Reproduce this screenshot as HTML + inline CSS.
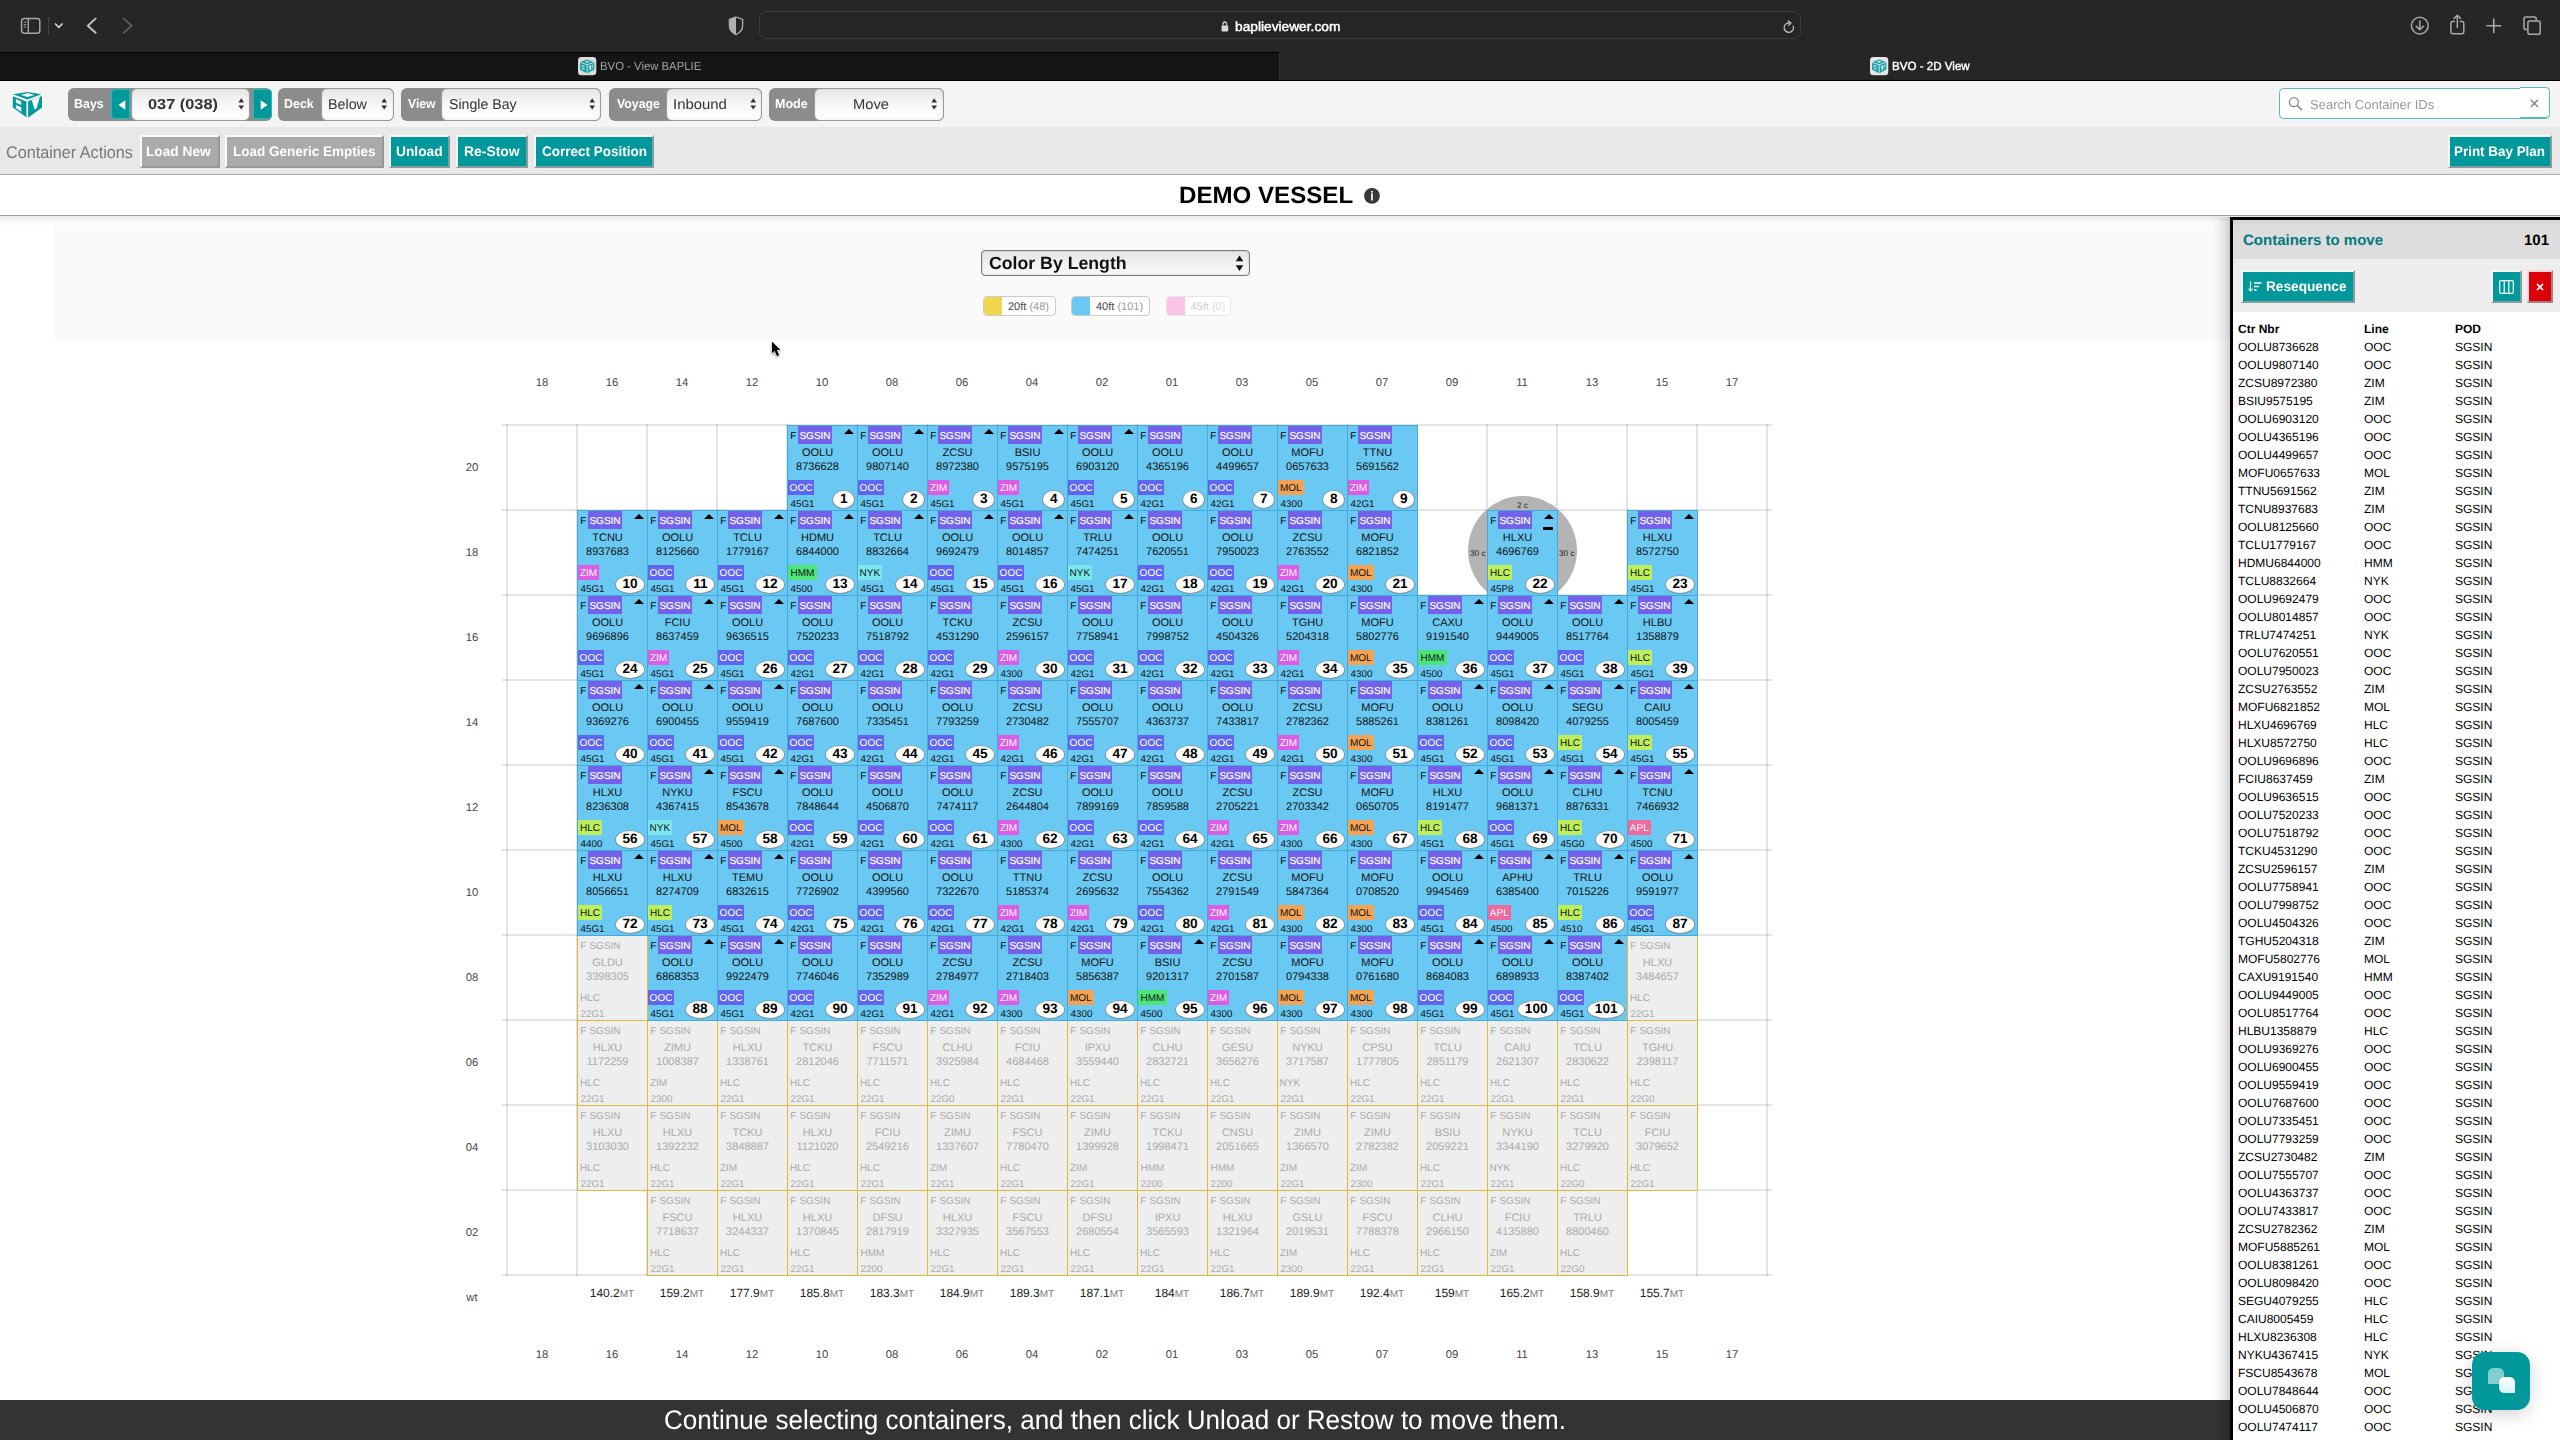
<!DOCTYPE html><html><head><meta charset="utf-8"><title>BVO - 2D View</title><style>
*{box-sizing:border-box;margin:0;padding:0}
html,body{width:2560px;height:1440px;overflow:hidden;background:#fff}
body{position:relative;font-family:"Liberation Sans",sans-serif;color:#000;text-rendering:geometricPrecision}
div,span,i,b,u,em,s,q{position:absolute;font-style:normal;font-weight:normal;text-decoration:none;white-space:nowrap}
q:before,q:after{content:none}
svg{position:absolute;overflow:visible}
/* browser chrome */
#ch{left:0;top:0;width:2560px;height:81px;background:#262626}
#ch .t1{left:0;top:52px;width:1280px;height:28px;background:#151515;border-top:1px solid #000;border-right:1px solid #323232}
#ch .bl{left:0;top:80px;width:2560px;height:1px;background:#000}
#ch .ab{left:759px;top:11px;width:1042px;height:28px;border:1px solid #3c3c3c;border-radius:7px;background:#252525}
#ch .url{left:1236px;top:18px;font-size:13.2px;line-height:16px;color:#fff;font-weight:bold;letter-spacing:-.1px}
#ch .tt{font-size:12px;line-height:16px;top:58px}
/* toolbars */
#t1{left:0;top:81px;width:2560px;height:46px;background:#f4f4f4}
#t2{left:0;top:127px;width:2560px;height:48px;background:#e8e8e8;border-bottom:1.3px solid #aaa}
.grp{top:87.5px;height:33px;background:#8c8c8c;border-radius:6px}
.grp .lb{left:0;top:0;height:30px;line-height:30px;color:#fff;font-size:14px;font-weight:bold;text-align:center}
.sel{top:87.5px;height:33px;border:1px solid #9a9a9a;border-radius:6px;background:linear-gradient(#e6e6e6,#f4f4f4 40%,#fdfdfd 80%);box-shadow:inset 0 0 2px rgba(0,0,0,.12)}
.sel .ar{right:5px;top:8px;width:7px;height:14px}
.tb{top:89px;width:19px;height:30px;background:#00989b;border:1px solid #2bb;border-radius:3px}
.btn{height:32.5px;line-height:28px;font-size:15px;font-weight:bold;color:#fff;text-align:center;border:2px solid;}
.btn.g{background:#aaa;border-color:#fafafa #979797 #979797 #fafafa}
.btn.t{background:#00989b;border-color:#f4fafa #8a9c9c #8a9c9c #f4fafa}
#ttl{left:0;top:175px;width:2560px;height:41px;background:#fff;border-bottom:1.2px solid #9e9e9e}
#ttl .h{left:1180px;top:6px;font-size:25px;line-height:30px;font-weight:bold;color:#000}
#lg{left:54px;top:225px;width:2176px;height:115px;background:#fafafa}
/* grid */
.gl{background:rgba(0,0,0,.105)}
.ax{font-size:11.3px;line-height:14px;color:#484848;width:40px;text-align:center}
.c{width:71px;height:86px;border:1px solid}
.c.b{background:#69c9f3;border-color:#47a9d8}
.c.y{background:#eeeeee;border-color:#d8ba3c;color:#aaa}
.c .f{left:2.3px;top:4px;font-size:10px;line-height:14px}
.c .p{left:10px;top:0;height:18px;width:34px;font-size:10px;line-height:22px;text-align:center;overflow:hidden}
.c.b .p{background:#7361ec;color:#fff;-webkit-text-stroke:.2px #fff}
.c .n{left:0;top:20px;width:59px;text-align:center;font-size:11px;line-height:14px}
.c.b .n{color:#111}
.c .l{left:0;top:54px;height:15px;font-size:10px;line-height:18px;text-align:center;overflow:hidden}
.c .i{left:2.6px;top:71.6px;font-size:9.8px;line-height:14px}
.c.b .i{color:#111}
.c .s{right:2.8px;top:64.6px;height:17px;min-width:21px;padding:0 6.7px;border-radius:50%;background:#fff;font-size:13.6px;line-height:15px;font-weight:bold;text-align:center;color:#000;box-shadow:0 0 0 .8px rgba(150,115,105,.6),0 1px 1.5px rgba(0,0,0,.18)}
.c .t{left:56.1px;top:2.9px;width:0;height:0;border-left:5px solid transparent;border-right:5px solid transparent;border-bottom:5px solid #000}
.wt{font-size:12px;line-height:14px;color:#222;width:90px;text-align:center}
.ph{font-size:12px;line-height:14px;font-weight:bold;color:#000}
.pr{left:0;width:327px;height:18px;font-size:12px;line-height:14px;color:#000}
.wt span{position:static;font-size:10px;color:#777}
.c.b .OOC{background:#5f66f2;color:#fff}.OOC{width:26px}
.c.b .ZIM{background:#dc5ce6;color:#fff}.ZIM{width:21px}
.c.b .HMM{background:#4de57a;color:#111}.HMM{width:29px}
.c.b .NYK{background:#7be6ee;color:#111}.NYK{width:23.8px}
.c.b .MOL{background:#f2a354;color:#111}.MOL{width:25.5px}
.c.b .HLC{background:#bdee5c;color:#111}.HLC{width:24px}
.c.b .APL{background:#f0699c;color:#fff}.APL{width:22.5px}
</style></head><body>
<div id="ch"><div class="t1"></div><div class="bl"></div><div class="ab"></div>
<svg style="left:20px;top:17px" width="22" height="18" viewBox="0 0 22 18"><rect x="1.6" y="1.6" width="18.2" height="14.6" rx="2.6" fill="none" stroke="#a8a8a8" stroke-width="1.5"/><path d="M8.3 1.6V16.2" stroke="#a8a8a8" stroke-width="1.4"/><path d="M3.7 5.2H6.2M3.7 7.6H6.2M3.7 10H6.2" stroke="#a8a8a8" stroke-width="1"/></svg>
<div style="left:48px;top:17px;width:1px;height:18px;background:#454545"></div>
<svg style="left:54px;top:22px" width="10" height="8" viewBox="0 0 10 8"><path d="M1.5 2L4.8 5.4L8.1 2" fill="none" stroke="#d0d0d0" stroke-width="1.7" stroke-linecap="round" stroke-linejoin="round"/></svg>
<svg style="left:86px;top:17px" width="12" height="18" viewBox="0 0 12 18"><path d="M9.6 1.6L1.8 8.7L9.6 15.8" fill="none" stroke="#c4c4c4" stroke-width="1.9" stroke-linecap="round" stroke-linejoin="round"/></svg>
<svg style="left:122px;top:17px" width="12" height="18" viewBox="0 0 12 18"><path d="M1.8 1.6L9.6 8.7L1.8 15.8" fill="none" stroke="#5c5c5c" stroke-width="1.9" stroke-linecap="round" stroke-linejoin="round"/></svg>
<svg style="left:728px;top:16px" width="16" height="20" viewBox="0 0 16 20"><path d="M8 1L14.6 3.4V9.5C14.6 13.8 11.7 16.9 8 18.6C4.3 16.9 1.4 13.8 1.4 9.5V3.4Z" fill="none" stroke="#b0b0b0" stroke-width="1.3"/><path d="M8 1L1.4 3.4V9.5C1.4 13.8 4.3 16.9 8 18.6Z" fill="#b0b0b0"/></svg>
<svg style="left:1220.8px;top:20.5px" width="7.9" height="11" viewBox="0 0 9 11" preserveAspectRatio="none"><rect x="0.6" y="4.6" width="7.6" height="6" rx="1" fill="#d8d8d8"/><path d="M2.3 4.8V3.2C2.3 1.9 3.2 1 4.4 1C5.6 1 6.5 1.9 6.5 3.2V4.8" fill="none" stroke="#d8d8d8" stroke-width="1.3"/></svg>
<span style="left:1235.49px;top:20.03px;font-size:13.2px;line-height:13.2px;color:#fff;transform:scaleX(1.0413);transform-origin:0 0;-webkit-text-stroke:.45px #fff;">baplieviewer.com</span>
<svg style="left:1782px;top:20px" width="14" height="14" viewBox="0 0 14 14"><path d="M11.3 6.2A4.7 4.7 0 1 1 8.2 3.2" fill="none" stroke="#bdbdbd" stroke-width="1.3" stroke-linecap="round"/><path d="M6.3 0.9L9 3L6.6 5.4" fill="none" stroke="#bdbdbd" stroke-width="1.3" stroke-linecap="round" stroke-linejoin="round"/></svg>
<svg style="left:2410px;top:16px" width="20" height="20" viewBox="0 0 20 20"><circle cx="9.8" cy="9.6" r="8.4" fill="none" stroke="#a8a8a8" stroke-width="1.5"/><path d="M9.8 5V13.6M6.3 10.4L9.8 13.8L13.3 10.4" fill="none" stroke="#a8a8a8" stroke-width="1.5" stroke-linecap="round" stroke-linejoin="round"/></svg>
<svg style="left:2448px;top:13px" width="20" height="24" viewBox="0 0 20 24"><path d="M6.4 8.5H4.6C3.5 8.5 2.9 9.1 2.9 10.2V19C2.9 20.1 3.5 20.7 4.6 20.7H14.1C15.2 20.7 15.8 20.1 15.8 19V10.2C15.8 9.1 15.2 8.5 14.1 8.5H12.3" fill="none" stroke="#a8a8a8" stroke-width="1.5" stroke-linecap="round"/><path d="M9.35 14.4V2.6M6.2 5.4L9.35 2.2L12.5 5.4" fill="none" stroke="#a8a8a8" stroke-width="1.5" stroke-linecap="round" stroke-linejoin="round"/></svg>
<svg style="left:2486px;top:18px" width="16" height="16" viewBox="0 0 16 16"><path d="M7.75 1V14.6M0.95 7.8H14.55" stroke="#a8a8a8" stroke-width="1.6" stroke-linecap="round"/></svg>
<svg style="left:2522px;top:15px" width="20" height="21" viewBox="0 0 20 21"><path d="M5.3 14.6H3.8C2.7 14.6 2 13.9 2 12.8V3.9C2 2.8 2.7 2.1 3.8 2.1H12.4C13.5 2.1 14.2 2.8 14.2 3.9V5.4" fill="none" stroke="#a8a8a8" stroke-width="1.5"/><rect x="5.9" y="5.9" width="12.3" height="13.4" rx="1.9" fill="none" stroke="#a8a8a8" stroke-width="1.5"/></svg>
<svg style="left:578.3px;top:56.7px" width="18.3" height="18.3" viewBox="0 0 18.3 18.3"><rect width="18.3" height="18.3" rx="3.5" fill="#dcdcdc"/><g fill="#17a3a8"><path d="M9.15 2.6L16 4.9L9.15 7.2L2.3 4.9Z"/><path d="M2 5.7L8.7 8V16.2L2 12.4Z"/><path d="M9.6 8L16.3 5.7V12.4L9.6 16.2Z"/></g><g fill="#dcdcdc"><path d="M9.15 3.7L11.8 4.7L9.15 5.7L6.5 4.7Z"/><path d="M3.6 8L6.4 9V10.2L3.6 9.2Z"/><path d="M3.6 10.4L6.4 11.4V12.8L3.6 11.6Z"/><path d="M10.9 9L13 8.2V12.9L12 13.4Z"/><path d="M13.7 8L15.2 7.4L14 12.2Z"/></g></svg>
<svg style="left:1869.8px;top:56.7px" width="18.3" height="18.3" viewBox="0 0 18.3 18.3"><rect width="18.3" height="18.3" rx="3.5" fill="#e6e6e6"/><g fill="#17a3a8"><path d="M9.15 2.6L16 4.9L9.15 7.2L2.3 4.9Z"/><path d="M2 5.7L8.7 8V16.2L2 12.4Z"/><path d="M9.6 8L16.3 5.7V12.4L9.6 16.2Z"/></g><g fill="#e6e6e6"><path d="M9.15 3.7L11.8 4.7L9.15 5.7L6.5 4.7Z"/><path d="M3.6 8L6.4 9V10.2L3.6 9.2Z"/><path d="M3.6 10.4L6.4 11.4V12.8L3.6 11.6Z"/><path d="M10.9 9L13 8.2V12.9L12 13.4Z"/><path d="M13.7 8L15.2 7.4L14 12.2Z"/></g></svg>
<span style="left:599.54px;top:61.11px;font-size:11.8px;line-height:11.8px;color:#a2a2a2;transform:scaleX(0.9614);transform-origin:0 0;">BVO - View BAPLIE</span>
<span style="left:1891.62px;top:61.11px;font-size:11.8px;line-height:11.8px;color:#fff;transform:scaleX(0.9826);transform-origin:0 0;-webkit-text-stroke:.4px #fff;">BVO - 2D View</span>
</div>
<div id="t1"><svg style="left:0;top:0" width="60" height="46" viewBox="0 81 60 46"><g fill="#009a9b"><path d="M12.9 94.3L27.4 91.9L41.3 94.3L27.4 99.5Z"/><path d="M12.8 96.2L26.4 101.4V117.2L12.8 107.6Z"/><path d="M28.1 101.2L42 96.1V107.5L28.1 117.75Z"/></g><g fill="#f4f4f4"><path d="M20.9 94.9L27.4 92.95L34.6 94.9L27.4 96.9Z"/><path d="M15.9 99.1L21.3 101.4V105L15.9 102.75Z"/><path d="M15.9 105L21.3 107.3V111.8L15.9 108.2Z"/><path d="M31.7 99.9L40 96.85L36.6 108.5L34.6 109.6Z"/></g></svg></div>
<div class="grp" style="left:68.4px;width:203.6px"></div><div class="sel" style="left:131.3px;width:119.1px"></div>
<div class="tb" style="left:111px;border-radius:4px 0 0 4px"><svg style="left:5.5px;top:9.5px" width="8" height="10"><path d="M7.3 0.3V9.7L0.5 5Z" fill="#fff"/></svg></div>
<div class="tb" style="left:253px;border-radius:0 4px 4px 0"><svg style="left:5.5px;top:9.5px" width="8" height="10"><path d="M0.7 0.3V9.7L7.5 5Z" fill="#fff"/></svg></div>
<div class="grp" style="left:278px;width:115.5px"></div><div class="sel" style="left:321px;width:72.5px"></div>
<div class="grp" style="left:401.1px;width:200.4px"></div><div class="sel" style="left:440.8px;width:160.7px"></div>
<div class="grp" style="left:609.3px;width:153.2px"></div><div class="sel" style="left:665.7px;width:96.8px"></div>
<div class="grp" style="left:769.2px;width:174.6px"></div><div class="sel" style="left:813.7px;width:130.1px"></div>
<svg style="left:237.8px;top:98.3px" width="6.4" height="11.8" viewBox="0 0 7 14"><path d="M3.5 0.3L6.9 5.2H0.1Z M3.5 13.7L6.9 8.8H0.1Z" fill="#333"/></svg>
<svg style="left:380.8px;top:98.3px" width="6.4" height="11.8" viewBox="0 0 7 14"><path d="M3.5 0.3L6.9 5.2H0.1Z M3.5 13.7L6.9 8.8H0.1Z" fill="#333"/></svg>
<svg style="left:588.8px;top:98.3px" width="6.4" height="11.8" viewBox="0 0 7 14"><path d="M3.5 0.3L6.9 5.2H0.1Z M3.5 13.7L6.9 8.8H0.1Z" fill="#333"/></svg>
<svg style="left:749.6px;top:98.3px" width="6.4" height="11.8" viewBox="0 0 7 14"><path d="M3.5 0.3L6.9 5.2H0.1Z M3.5 13.7L6.9 8.8H0.1Z" fill="#333"/></svg>
<svg style="left:930.6px;top:98.3px" width="6.4" height="11.8" viewBox="0 0 7 14"><path d="M3.5 0.3L6.9 5.2H0.1Z M3.5 13.7L6.9 8.8H0.1Z" fill="#333"/></svg>
<span style="left:74.16px;top:97.20px;font-size:13px;line-height:13px;font-weight:bold;color:#fff;transform:scaleX(0.9580);transform-origin:0 0;">Bays</span>
<span style="left:148.44px;top:97.73px;font-size:14.5px;line-height:14.5px;font-weight:bold;color:#333;transform:scaleX(1.1269);transform-origin:0 0;">037 (038)</span>
<span style="left:284.16px;top:97.20px;font-size:13px;line-height:13px;font-weight:bold;color:#fff;transform:scaleX(0.9587);transform-origin:0 0;">Deck</span>
<span style="left:327.88px;top:97.90px;font-size:14.3px;line-height:14.3px;color:#333;transform:scaleX(0.9987);transform-origin:0 0;">Below</span>
<span style="left:407.68px;top:97.20px;font-size:13px;line-height:13px;font-weight:bold;color:#fff;transform:scaleX(0.9368);transform-origin:0 0;">View</span>
<span style="left:449.08px;top:97.90px;font-size:14.3px;line-height:14.3px;color:#333;transform:scaleX(0.9896);transform-origin:0 0;">Single Bay</span>
<span style="left:616.58px;top:97.20px;font-size:13px;line-height:13px;font-weight:bold;color:#fff;transform:scaleX(0.9479);transform-origin:0 0;">Voyage</span>
<span style="left:673.00px;top:97.90px;font-size:14.3px;line-height:14.3px;color:#333;transform:scaleX(1.0430);transform-origin:0 0;">Inbound</span>
<span style="left:775.46px;top:97.20px;font-size:13px;line-height:13px;font-weight:bold;color:#fff;transform:scaleX(0.9625);transform-origin:0 0;">Mode</span>
<span style="left:853.14px;top:97.90px;font-size:14.3px;line-height:14.3px;color:#333;transform:scaleX(1.0303);transform-origin:0 0;">Move</span>
<div style="left:2279px;top:88px;width:271px;height:30.5px;border:1px solid #58b9ba;border-radius:4.5px;background:#fff"></div>
<div style="left:2520px;top:87.3px;width:30px;height:30.5px;border:1px solid #58b9ba;border-left:0;border-radius:0 4.5px 4.5px 0;background:#fff"></div>
<svg style="left:2288px;top:96px" width="16" height="16" viewBox="0 0 16 16"><circle cx="5.9" cy="6.2" r="4.5" fill="none" stroke="#888" stroke-width="1.3"/><path d="M9.3 9.6L13.6 13.6" stroke="#888" stroke-width="1.5" stroke-linecap="round"/></svg>
<span style="left:2309.98px;top:97.60px;font-size:13px;line-height:13px;color:#9a9a9a;transform:scaleX(0.9998);transform-origin:0 0;">Search Container IDs</span>
<svg style="left:2530px;top:99px" width="9" height="9" viewBox="0 0 9 9"><path d="M0.8 0.8L8 8M8 0.8L0.8 8" stroke="#888" stroke-width="1.5"/></svg>
<div id="t2"></div>
<span style="left:6.17px;top:143.91px;font-size:17px;line-height:17px;color:#777;transform:scaleX(0.9526);transform-origin:0 0;">Container Actions</span>
<div class="btn g" style="left:139.8px;top:135px;width:80.1px"></div>
<span style="left:146.43px;top:145.12px;font-size:13.8px;line-height:13.8px;font-weight:bold;color:#fff;transform:scaleX(0.9934);transform-origin:0 0;">Load New</span>
<div class="btn g" style="left:225px;top:135px;width:158.7px"></div>
<span style="left:232.74px;top:145.12px;font-size:13.8px;line-height:13.8px;font-weight:bold;color:#fff;transform:scaleX(0.9788);transform-origin:0 0;">Load Generic Empties</span>
<div class="btn t" style="left:389.3px;top:135px;width:60.9px"></div>
<span style="left:396.23px;top:145.12px;font-size:13.8px;line-height:13.8px;font-weight:bold;color:#fff;transform:scaleX(0.9983);transform-origin:0 0;">Unload</span>
<div class="btn t" style="left:456.1px;top:135px;width:72.4px"></div>
<span style="left:463.72px;top:145.12px;font-size:13.8px;line-height:13.8px;font-weight:bold;color:#fff;transform:scaleX(1.0069);transform-origin:0 0;">Re-Stow</span>
<div class="btn t" style="left:534.1px;top:135px;width:120.2px"></div>
<span style="left:541.61px;top:145.12px;font-size:13.8px;line-height:13.8px;font-weight:bold;color:#fff;transform:scaleX(0.9791);transform-origin:0 0;">Correct Position</span>
<div class="btn t" style="left:2447.5px;top:135px;width:104px"></div>
<span style="left:2453.65px;top:145.12px;font-size:13.8px;line-height:13.8px;font-weight:bold;color:#fff;transform:scaleX(0.9727);transform-origin:0 0;">Print Bay Plan</span>
<div id="ttl"></div>
<span style="left:1179.44px;top:184.72px;font-size:23.6px;line-height:23.6px;font-weight:bold;color:#000;transform:scaleX(1.0215);transform-origin:0 0;">DEMO VESSEL</span>
<svg style="left:1363.9px;top:188px" width="16" height="16" viewBox="0 0 16 16"><circle cx="7.95" cy="7.9" r="7.9" fill="#383838"/><rect x="7.1" y="5.4" width="1.7" height="7.1" fill="#fff"/><rect x="7.1" y="3" width="1.7" height="1.6" fill="#fff"/></svg>
<div style="left:0;top:216px;width:2560px;height:10px;background:linear-gradient(rgba(0,0,0,.09),rgba(0,0,0,.03) 50%,rgba(0,0,0,0));z-index:3"></div>
<div id="lg">
<div style="left:927px;top:25px;width:269px;height:26px;border:1px solid #777;border-radius:4px;background:linear-gradient(#e4e4e4,#efefef 45%,#f8f8f8);box-shadow:inset 0 0 2px rgba(0,0,0,.2);"><svg style="right:5.5px;top:4px" width="9" height="16.5" viewBox="0 0 7 14"><path d="M3.5 0.5L6.7 5.4H0.3Z M3.5 13.5L6.7 8.6H0.3Z" fill="#111"/></svg></div>
<div style="left:929px;top:71px;width:72.5px;height:20px;border:1px solid #ccc;border-radius:4px;background:#fff;overflow:hidden"><div style="left:0;top:0;width:18px;height:18px;background:#f0d750"></div><div style="left:24px;top:3px;font-size:11px;line-height:14px;color:#444">20ft <span style="position:static;color:#999">(48)</span></div></div>
<div style="left:1017px;top:71px;width:78.5px;height:20px;border:1px solid #ccc;border-radius:4px;background:#fff;overflow:hidden"><div style="left:0;top:0;width:18px;height:18px;background:#69c9f3"></div><div style="left:24px;top:3px;font-size:11px;line-height:14px;color:#444">40ft <span style="position:static;color:#999">(101)</span></div></div>
<div style="left:1111.5px;top:71px;width:65.5px;height:20px;border:1px solid #e6e6e6;border-radius:4px;background:#fff;overflow:hidden"><div style="left:0;top:0;width:18px;height:18px;background:#f9c3e6"></div><div style="left:24px;top:3px;font-size:11px;line-height:14px;color:#ccc">45ft <span style="position:static;color:#ddd">(0)</span></div></div>
</div>
<span style="left:989.25px;top:255.22px;font-size:17.7px;line-height:17.7px;font-weight:bold;color:#111;transform:scaleX(1.0004);transform-origin:0 0;">Color By Length</span>
<svg style="left:770px;top:340px;z-index:50;filter:drop-shadow(0 1px 1.2px rgba(0,0,0,.45))" width="13" height="19" viewBox="0 0 13 19"><path d="M2.1 2L2.1 13.1L4.75 10.8L7.1 15.9L8.9 15.1L6.6 10.1L10 9.75Z" fill="#000" stroke="#fff" stroke-width="1.1" stroke-linejoin="round" paint-order="stroke"/><path d="M2.1 2L2.1 13.1L4.75 10.8L7.1 15.9L8.9 15.1L6.6 10.1L10 9.75Z" fill="#000"/></svg>
<div class="gl" style="left:506px;top:424px;width:2px;height:852px"></div>
<div class="gl" style="left:576px;top:424px;width:2px;height:852px"></div>
<div class="gl" style="left:646px;top:424px;width:2px;height:852px"></div>
<div class="gl" style="left:716px;top:424px;width:2px;height:852px"></div>
<div class="gl" style="left:786px;top:424px;width:2px;height:852px"></div>
<div class="gl" style="left:856px;top:424px;width:2px;height:852px"></div>
<div class="gl" style="left:926px;top:424px;width:2px;height:852px"></div>
<div class="gl" style="left:996px;top:424px;width:2px;height:852px"></div>
<div class="gl" style="left:1066px;top:424px;width:2px;height:852px"></div>
<div class="gl" style="left:1136px;top:424px;width:2px;height:852px"></div>
<div class="gl" style="left:1206px;top:424px;width:2px;height:852px"></div>
<div class="gl" style="left:1276px;top:424px;width:2px;height:852px"></div>
<div class="gl" style="left:1346px;top:424px;width:2px;height:852px"></div>
<div class="gl" style="left:1416px;top:424px;width:2px;height:852px"></div>
<div class="gl" style="left:1486px;top:424px;width:2px;height:852px"></div>
<div class="gl" style="left:1556px;top:424px;width:2px;height:852px"></div>
<div class="gl" style="left:1626px;top:424px;width:2px;height:852px"></div>
<div class="gl" style="left:1696px;top:424px;width:2px;height:852px"></div>
<div class="gl" style="left:1766px;top:424px;width:2px;height:852px"></div>
<div class="gl" style="left:502px;top:424px;width:1270px;height:2px"></div>
<div class="gl" style="left:502px;top:509px;width:1270px;height:2px"></div>
<div class="gl" style="left:502px;top:594px;width:1270px;height:2px"></div>
<div class="gl" style="left:502px;top:679px;width:1270px;height:2px"></div>
<div class="gl" style="left:502px;top:764px;width:1270px;height:2px"></div>
<div class="gl" style="left:502px;top:849px;width:1270px;height:2px"></div>
<div class="gl" style="left:502px;top:934px;width:1270px;height:2px"></div>
<div class="gl" style="left:502px;top:1019px;width:1270px;height:2px"></div>
<div class="gl" style="left:502px;top:1104px;width:1270px;height:2px"></div>
<div class="gl" style="left:502px;top:1189px;width:1270px;height:2px"></div>
<div class="gl" style="left:502px;top:1274px;width:1270px;height:2px"></div>
<div class="ax" style="left:522px;top:376.3px">18</div>
<div class="ax" style="left:522px;top:1348.3px">18</div>
<div class="ax" style="left:592px;top:376.3px">16</div>
<div class="ax" style="left:592px;top:1348.3px">16</div>
<div class="ax" style="left:662px;top:376.3px">14</div>
<div class="ax" style="left:662px;top:1348.3px">14</div>
<div class="ax" style="left:732px;top:376.3px">12</div>
<div class="ax" style="left:732px;top:1348.3px">12</div>
<div class="ax" style="left:802px;top:376.3px">10</div>
<div class="ax" style="left:802px;top:1348.3px">10</div>
<div class="ax" style="left:872px;top:376.3px">08</div>
<div class="ax" style="left:872px;top:1348.3px">08</div>
<div class="ax" style="left:942px;top:376.3px">06</div>
<div class="ax" style="left:942px;top:1348.3px">06</div>
<div class="ax" style="left:1012px;top:376.3px">04</div>
<div class="ax" style="left:1012px;top:1348.3px">04</div>
<div class="ax" style="left:1082px;top:376.3px">02</div>
<div class="ax" style="left:1082px;top:1348.3px">02</div>
<div class="ax" style="left:1152px;top:376.3px">01</div>
<div class="ax" style="left:1152px;top:1348.3px">01</div>
<div class="ax" style="left:1222px;top:376.3px">03</div>
<div class="ax" style="left:1222px;top:1348.3px">03</div>
<div class="ax" style="left:1292px;top:376.3px">05</div>
<div class="ax" style="left:1292px;top:1348.3px">05</div>
<div class="ax" style="left:1362px;top:376.3px">07</div>
<div class="ax" style="left:1362px;top:1348.3px">07</div>
<div class="ax" style="left:1432px;top:376.3px">09</div>
<div class="ax" style="left:1432px;top:1348.3px">09</div>
<div class="ax" style="left:1502px;top:376.3px">11</div>
<div class="ax" style="left:1502px;top:1348.3px">11</div>
<div class="ax" style="left:1572px;top:376.3px">13</div>
<div class="ax" style="left:1572px;top:1348.3px">13</div>
<div class="ax" style="left:1642px;top:376.3px">15</div>
<div class="ax" style="left:1642px;top:1348.3px">15</div>
<div class="ax" style="left:1712px;top:376.3px">17</div>
<div class="ax" style="left:1712px;top:1348.3px">17</div>
<div class="ax" style="left:452px;top:461px">20</div>
<div class="ax" style="left:452px;top:546px">18</div>
<div class="ax" style="left:452px;top:631px">16</div>
<div class="ax" style="left:452px;top:716px">14</div>
<div class="ax" style="left:452px;top:801px">12</div>
<div class="ax" style="left:452px;top:886px">10</div>
<div class="ax" style="left:452px;top:971px">08</div>
<div class="ax" style="left:452px;top:1056px">06</div>
<div class="ax" style="left:452px;top:1141px">04</div>
<div class="ax" style="left:452px;top:1226px">02</div>
<div class="ax" style="left:452px;top:1291px">wt</div>
<div class="wt" style="left:567px;top:1286px">140.2<span>MT</span></div>
<div class="wt" style="left:637px;top:1286px">159.2<span>MT</span></div>
<div class="wt" style="left:707px;top:1286px">177.9<span>MT</span></div>
<div class="wt" style="left:777px;top:1286px">185.8<span>MT</span></div>
<div class="wt" style="left:847px;top:1286px">183.3<span>MT</span></div>
<div class="wt" style="left:917px;top:1286px">184.9<span>MT</span></div>
<div class="wt" style="left:987px;top:1286px">189.3<span>MT</span></div>
<div class="wt" style="left:1057px;top:1286px">187.1<span>MT</span></div>
<div class="wt" style="left:1127px;top:1286px">184<span>MT</span></div>
<div class="wt" style="left:1197px;top:1286px">186.7<span>MT</span></div>
<div class="wt" style="left:1267px;top:1286px">189.9<span>MT</span></div>
<div class="wt" style="left:1337px;top:1286px">192.4<span>MT</span></div>
<div class="wt" style="left:1407px;top:1286px">159<span>MT</span></div>
<div class="wt" style="left:1477px;top:1286px">165.2<span>MT</span></div>
<div class="wt" style="left:1547px;top:1286px">158.9<span>MT</span></div>
<div class="wt" style="left:1617px;top:1286px">155.7<span>MT</span></div>
<div style="left:1468px;top:495.8px;width:109px;height:109px;border-radius:50%;background:#b4b4b4"></div>
<div style="left:1517px;top:501px;font-size:8.2px;line-height:10px;color:#222">2 c</div>
<div style="left:1470px;top:549px;font-size:8.2px;line-height:10px;color:#222">30 c</div>
<div style="left:1559px;top:549px;font-size:8.2px;line-height:10px;color:#222">30 c</div>
<div class="c y" style="left:1137px;top:1190px"><i class="f">F</i><b class="p">SGSIN</b><span class="n">IPXU<br>3565593</span><em class="l HLC">HLC</em><s class="i">22G1</s></div>
<div class="c y" style="left:1137px;top:1105px"><i class="f">F</i><b class="p">SGSIN</b><span class="n">TCKU<br>1998471</span><em class="l HMM">HMM</em><s class="i">2200</s></div>
<div class="c y" style="left:1137px;top:1020px"><i class="f">F</i><b class="p">SGSIN</b><span class="n">CLHU<br>2832721</span><em class="l HLC">HLC</em><s class="i">22G1</s></div>
<div class="c b" style="left:1137px;top:935px"><i class="f">F</i><b class="p">SGSIN</b><u class="t"></u><span class="n">BSIU<br>9201317</span><em class="l HMM">HMM</em><s class="i">4500</s><q class="s">95</q></div>
<div class="c b" style="left:1137px;top:850px"><i class="f">F</i><b class="p">SGSIN</b><span class="n">OOLU<br>7554362</span><em class="l OOC">OOC</em><s class="i">42G1</s><q class="s">80</q></div>
<div class="c b" style="left:1137px;top:765px"><i class="f">F</i><b class="p">SGSIN</b><span class="n">OOLU<br>7859588</span><em class="l OOC">OOC</em><s class="i">42G1</s><q class="s">64</q></div>
<div class="c b" style="left:1137px;top:680px"><i class="f">F</i><b class="p">SGSIN</b><span class="n">OOLU<br>4363737</span><em class="l OOC">OOC</em><s class="i">42G1</s><q class="s">48</q></div>
<div class="c b" style="left:1137px;top:595px"><i class="f">F</i><b class="p">SGSIN</b><span class="n">OOLU<br>7998752</span><em class="l OOC">OOC</em><s class="i">42G1</s><q class="s">32</q></div>
<div class="c b" style="left:1137px;top:510px"><i class="f">F</i><b class="p">SGSIN</b><span class="n">OOLU<br>7620551</span><em class="l OOC">OOC</em><s class="i">42G1</s><q class="s">18</q></div>
<div class="c b" style="left:1137px;top:425px"><i class="f">F</i><b class="p">SGSIN</b><span class="n">OOLU<br>4365196</span><em class="l OOC">OOC</em><s class="i">42G1</s><q class="s">6</q></div>
<div class="c y" style="left:1067px;top:1190px"><i class="f">F</i><b class="p">SGSIN</b><span class="n">DFSU<br>2680554</span><em class="l HLC">HLC</em><s class="i">22G1</s></div>
<div class="c y" style="left:1067px;top:1105px"><i class="f">F</i><b class="p">SGSIN</b><span class="n">ZIMU<br>1399928</span><em class="l ZIM">ZIM</em><s class="i">22G1</s></div>
<div class="c y" style="left:1067px;top:1020px"><i class="f">F</i><b class="p">SGSIN</b><span class="n">IPXU<br>3559440</span><em class="l HLC">HLC</em><s class="i">22G1</s></div>
<div class="c b" style="left:1067px;top:935px"><i class="f">F</i><b class="p">SGSIN</b><span class="n">MOFU<br>5856387</span><em class="l MOL">MOL</em><s class="i">4300</s><q class="s">94</q></div>
<div class="c b" style="left:1067px;top:850px"><i class="f">F</i><b class="p">SGSIN</b><span class="n">ZCSU<br>2695632</span><em class="l ZIM">ZIM</em><s class="i">42G1</s><q class="s">79</q></div>
<div class="c b" style="left:1067px;top:765px"><i class="f">F</i><b class="p">SGSIN</b><span class="n">OOLU<br>7899169</span><em class="l OOC">OOC</em><s class="i">42G1</s><q class="s">63</q></div>
<div class="c b" style="left:1067px;top:680px"><i class="f">F</i><b class="p">SGSIN</b><span class="n">OOLU<br>7555707</span><em class="l OOC">OOC</em><s class="i">42G1</s><q class="s">47</q></div>
<div class="c b" style="left:1067px;top:595px"><i class="f">F</i><b class="p">SGSIN</b><span class="n">OOLU<br>7758941</span><em class="l OOC">OOC</em><s class="i">42G1</s><q class="s">31</q></div>
<div class="c b" style="left:1067px;top:510px"><i class="f">F</i><b class="p">SGSIN</b><u class="t"></u><span class="n">TRLU<br>7474251</span><em class="l NYK">NYK</em><s class="i">45G1</s><q class="s">17</q></div>
<div class="c b" style="left:1067px;top:425px"><i class="f">F</i><b class="p">SGSIN</b><u class="t"></u><span class="n">OOLU<br>6903120</span><em class="l OOC">OOC</em><s class="i">45G1</s><q class="s">5</q></div>
<div class="c y" style="left:1207px;top:1190px"><i class="f">F</i><b class="p">SGSIN</b><span class="n">HLXU<br>1321964</span><em class="l HLC">HLC</em><s class="i">22G1</s></div>
<div class="c y" style="left:1207px;top:1105px"><i class="f">F</i><b class="p">SGSIN</b><span class="n">CNSU<br>2051665</span><em class="l HMM">HMM</em><s class="i">2200</s></div>
<div class="c y" style="left:1207px;top:1020px"><i class="f">F</i><b class="p">SGSIN</b><span class="n">GESU<br>3656276</span><em class="l HLC">HLC</em><s class="i">22G1</s></div>
<div class="c b" style="left:1207px;top:935px"><i class="f">F</i><b class="p">SGSIN</b><span class="n">ZCSU<br>2701587</span><em class="l ZIM">ZIM</em><s class="i">4300</s><q class="s">96</q></div>
<div class="c b" style="left:1207px;top:850px"><i class="f">F</i><b class="p">SGSIN</b><span class="n">ZCSU<br>2791549</span><em class="l ZIM">ZIM</em><s class="i">42G1</s><q class="s">81</q></div>
<div class="c b" style="left:1207px;top:765px"><i class="f">F</i><b class="p">SGSIN</b><span class="n">ZCSU<br>2705221</span><em class="l ZIM">ZIM</em><s class="i">42G1</s><q class="s">65</q></div>
<div class="c b" style="left:1207px;top:680px"><i class="f">F</i><b class="p">SGSIN</b><span class="n">OOLU<br>7433817</span><em class="l OOC">OOC</em><s class="i">42G1</s><q class="s">49</q></div>
<div class="c b" style="left:1207px;top:595px"><i class="f">F</i><b class="p">SGSIN</b><span class="n">OOLU<br>4504326</span><em class="l OOC">OOC</em><s class="i">42G1</s><q class="s">33</q></div>
<div class="c b" style="left:1207px;top:510px"><i class="f">F</i><b class="p">SGSIN</b><span class="n">OOLU<br>7950023</span><em class="l OOC">OOC</em><s class="i">42G1</s><q class="s">19</q></div>
<div class="c b" style="left:1207px;top:425px"><i class="f">F</i><b class="p">SGSIN</b><span class="n">OOLU<br>4499657</span><em class="l OOC">OOC</em><s class="i">42G1</s><q class="s">7</q></div>
<div class="c y" style="left:997px;top:1190px"><i class="f">F</i><b class="p">SGSIN</b><span class="n">FSCU<br>3567553</span><em class="l HLC">HLC</em><s class="i">22G1</s></div>
<div class="c y" style="left:997px;top:1105px"><i class="f">F</i><b class="p">SGSIN</b><span class="n">FSCU<br>7780470</span><em class="l HLC">HLC</em><s class="i">22G1</s></div>
<div class="c y" style="left:997px;top:1020px"><i class="f">F</i><b class="p">SGSIN</b><span class="n">FCIU<br>4684468</span><em class="l HLC">HLC</em><s class="i">22G1</s></div>
<div class="c b" style="left:997px;top:935px"><i class="f">F</i><b class="p">SGSIN</b><span class="n">ZCSU<br>2718403</span><em class="l ZIM">ZIM</em><s class="i">4300</s><q class="s">93</q></div>
<div class="c b" style="left:997px;top:850px"><i class="f">F</i><b class="p">SGSIN</b><span class="n">TTNU<br>5185374</span><em class="l ZIM">ZIM</em><s class="i">42G1</s><q class="s">78</q></div>
<div class="c b" style="left:997px;top:765px"><i class="f">F</i><b class="p">SGSIN</b><span class="n">ZCSU<br>2644804</span><em class="l ZIM">ZIM</em><s class="i">4300</s><q class="s">62</q></div>
<div class="c b" style="left:997px;top:680px"><i class="f">F</i><b class="p">SGSIN</b><span class="n">ZCSU<br>2730482</span><em class="l ZIM">ZIM</em><s class="i">42G1</s><q class="s">46</q></div>
<div class="c b" style="left:997px;top:595px"><i class="f">F</i><b class="p">SGSIN</b><span class="n">ZCSU<br>2596157</span><em class="l ZIM">ZIM</em><s class="i">4300</s><q class="s">30</q></div>
<div class="c b" style="left:997px;top:510px"><i class="f">F</i><b class="p">SGSIN</b><u class="t"></u><span class="n">OOLU<br>8014857</span><em class="l OOC">OOC</em><s class="i">45G1</s><q class="s">16</q></div>
<div class="c b" style="left:997px;top:425px"><i class="f">F</i><b class="p">SGSIN</b><u class="t"></u><span class="n">BSIU<br>9575195</span><em class="l ZIM">ZIM</em><s class="i">45G1</s><q class="s">4</q></div>
<div class="c y" style="left:1277px;top:1190px"><i class="f">F</i><b class="p">SGSIN</b><span class="n">GSLU<br>2019531</span><em class="l ZIM">ZIM</em><s class="i">2300</s></div>
<div class="c y" style="left:1277px;top:1105px"><i class="f">F</i><b class="p">SGSIN</b><span class="n">ZIMU<br>1366570</span><em class="l ZIM">ZIM</em><s class="i">22G1</s></div>
<div class="c y" style="left:1277px;top:1020px"><i class="f">F</i><b class="p">SGSIN</b><span class="n">NYKU<br>3717587</span><em class="l NYK">NYK</em><s class="i">22G1</s></div>
<div class="c b" style="left:1277px;top:935px"><i class="f">F</i><b class="p">SGSIN</b><span class="n">MOFU<br>0794338</span><em class="l MOL">MOL</em><s class="i">4300</s><q class="s">97</q></div>
<div class="c b" style="left:1277px;top:850px"><i class="f">F</i><b class="p">SGSIN</b><span class="n">MOFU<br>5847364</span><em class="l MOL">MOL</em><s class="i">4300</s><q class="s">82</q></div>
<div class="c b" style="left:1277px;top:765px"><i class="f">F</i><b class="p">SGSIN</b><span class="n">ZCSU<br>2703342</span><em class="l ZIM">ZIM</em><s class="i">4300</s><q class="s">66</q></div>
<div class="c b" style="left:1277px;top:680px"><i class="f">F</i><b class="p">SGSIN</b><span class="n">ZCSU<br>2782362</span><em class="l ZIM">ZIM</em><s class="i">42G1</s><q class="s">50</q></div>
<div class="c b" style="left:1277px;top:595px"><i class="f">F</i><b class="p">SGSIN</b><span class="n">TGHU<br>5204318</span><em class="l ZIM">ZIM</em><s class="i">42G1</s><q class="s">34</q></div>
<div class="c b" style="left:1277px;top:510px"><i class="f">F</i><b class="p">SGSIN</b><span class="n">ZCSU<br>2763552</span><em class="l ZIM">ZIM</em><s class="i">42G1</s><q class="s">20</q></div>
<div class="c b" style="left:1277px;top:425px"><i class="f">F</i><b class="p">SGSIN</b><span class="n">MOFU<br>0657633</span><em class="l MOL">MOL</em><s class="i">4300</s><q class="s">8</q></div>
<div class="c y" style="left:927px;top:1190px"><i class="f">F</i><b class="p">SGSIN</b><span class="n">HLXU<br>3327935</span><em class="l HLC">HLC</em><s class="i">22G1</s></div>
<div class="c y" style="left:927px;top:1105px"><i class="f">F</i><b class="p">SGSIN</b><span class="n">ZIMU<br>1337607</span><em class="l ZIM">ZIM</em><s class="i">22G1</s></div>
<div class="c y" style="left:927px;top:1020px"><i class="f">F</i><b class="p">SGSIN</b><span class="n">CLHU<br>3925984</span><em class="l HLC">HLC</em><s class="i">22G0</s></div>
<div class="c b" style="left:927px;top:935px"><i class="f">F</i><b class="p">SGSIN</b><span class="n">ZCSU<br>2784977</span><em class="l ZIM">ZIM</em><s class="i">42G1</s><q class="s">92</q></div>
<div class="c b" style="left:927px;top:850px"><i class="f">F</i><b class="p">SGSIN</b><span class="n">OOLU<br>7322670</span><em class="l OOC">OOC</em><s class="i">42G1</s><q class="s">77</q></div>
<div class="c b" style="left:927px;top:765px"><i class="f">F</i><b class="p">SGSIN</b><span class="n">OOLU<br>7474117</span><em class="l OOC">OOC</em><s class="i">42G1</s><q class="s">61</q></div>
<div class="c b" style="left:927px;top:680px"><i class="f">F</i><b class="p">SGSIN</b><span class="n">OOLU<br>7793259</span><em class="l OOC">OOC</em><s class="i">42G1</s><q class="s">45</q></div>
<div class="c b" style="left:927px;top:595px"><i class="f">F</i><b class="p">SGSIN</b><span class="n">TCKU<br>4531290</span><em class="l OOC">OOC</em><s class="i">42G1</s><q class="s">29</q></div>
<div class="c b" style="left:927px;top:510px"><i class="f">F</i><b class="p">SGSIN</b><u class="t"></u><span class="n">OOLU<br>9692479</span><em class="l OOC">OOC</em><s class="i">45G1</s><q class="s">15</q></div>
<div class="c b" style="left:927px;top:425px"><i class="f">F</i><b class="p">SGSIN</b><u class="t"></u><span class="n">ZCSU<br>8972380</span><em class="l ZIM">ZIM</em><s class="i">45G1</s><q class="s">3</q></div>
<div class="c y" style="left:1347px;top:1190px"><i class="f">F</i><b class="p">SGSIN</b><span class="n">FSCU<br>7788378</span><em class="l HLC">HLC</em><s class="i">22G1</s></div>
<div class="c y" style="left:1347px;top:1105px"><i class="f">F</i><b class="p">SGSIN</b><span class="n">ZIMU<br>2782382</span><em class="l ZIM">ZIM</em><s class="i">2300</s></div>
<div class="c y" style="left:1347px;top:1020px"><i class="f">F</i><b class="p">SGSIN</b><span class="n">CPSU<br>1777805</span><em class="l HLC">HLC</em><s class="i">22G1</s></div>
<div class="c b" style="left:1347px;top:935px"><i class="f">F</i><b class="p">SGSIN</b><span class="n">MOFU<br>0761680</span><em class="l MOL">MOL</em><s class="i">4300</s><q class="s">98</q></div>
<div class="c b" style="left:1347px;top:850px"><i class="f">F</i><b class="p">SGSIN</b><span class="n">MOFU<br>0708520</span><em class="l MOL">MOL</em><s class="i">4300</s><q class="s">83</q></div>
<div class="c b" style="left:1347px;top:765px"><i class="f">F</i><b class="p">SGSIN</b><span class="n">MOFU<br>0650705</span><em class="l MOL">MOL</em><s class="i">4300</s><q class="s">67</q></div>
<div class="c b" style="left:1347px;top:680px"><i class="f">F</i><b class="p">SGSIN</b><span class="n">MOFU<br>5885261</span><em class="l MOL">MOL</em><s class="i">4300</s><q class="s">51</q></div>
<div class="c b" style="left:1347px;top:595px"><i class="f">F</i><b class="p">SGSIN</b><span class="n">MOFU<br>5802776</span><em class="l MOL">MOL</em><s class="i">4300</s><q class="s">35</q></div>
<div class="c b" style="left:1347px;top:510px"><i class="f">F</i><b class="p">SGSIN</b><span class="n">MOFU<br>6821852</span><em class="l MOL">MOL</em><s class="i">4300</s><q class="s">21</q></div>
<div class="c b" style="left:1347px;top:425px"><i class="f">F</i><b class="p">SGSIN</b><span class="n">TTNU<br>5691562</span><em class="l ZIM">ZIM</em><s class="i">42G1</s><q class="s">9</q></div>
<div class="c y" style="left:857px;top:1190px"><i class="f">F</i><b class="p">SGSIN</b><span class="n">DFSU<br>2817919</span><em class="l HMM">HMM</em><s class="i">2200</s></div>
<div class="c y" style="left:857px;top:1105px"><i class="f">F</i><b class="p">SGSIN</b><span class="n">FCIU<br>2549216</span><em class="l HLC">HLC</em><s class="i">22G1</s></div>
<div class="c y" style="left:857px;top:1020px"><i class="f">F</i><b class="p">SGSIN</b><span class="n">FSCU<br>7711571</span><em class="l HLC">HLC</em><s class="i">22G1</s></div>
<div class="c b" style="left:857px;top:935px"><i class="f">F</i><b class="p">SGSIN</b><span class="n">OOLU<br>7352989</span><em class="l OOC">OOC</em><s class="i">42G1</s><q class="s">91</q></div>
<div class="c b" style="left:857px;top:850px"><i class="f">F</i><b class="p">SGSIN</b><span class="n">OOLU<br>4399560</span><em class="l OOC">OOC</em><s class="i">42G1</s><q class="s">76</q></div>
<div class="c b" style="left:857px;top:765px"><i class="f">F</i><b class="p">SGSIN</b><span class="n">OOLU<br>4506870</span><em class="l OOC">OOC</em><s class="i">42G1</s><q class="s">60</q></div>
<div class="c b" style="left:857px;top:680px"><i class="f">F</i><b class="p">SGSIN</b><span class="n">OOLU<br>7335451</span><em class="l OOC">OOC</em><s class="i">42G1</s><q class="s">44</q></div>
<div class="c b" style="left:857px;top:595px"><i class="f">F</i><b class="p">SGSIN</b><span class="n">OOLU<br>7518792</span><em class="l OOC">OOC</em><s class="i">42G1</s><q class="s">28</q></div>
<div class="c b" style="left:857px;top:510px"><i class="f">F</i><b class="p">SGSIN</b><u class="t"></u><span class="n">TCLU<br>8832664</span><em class="l NYK">NYK</em><s class="i">45G1</s><q class="s">14</q></div>
<div class="c b" style="left:857px;top:425px"><i class="f">F</i><b class="p">SGSIN</b><u class="t"></u><span class="n">OOLU<br>9807140</span><em class="l OOC">OOC</em><s class="i">45G1</s><q class="s">2</q></div>
<div class="c y" style="left:1417px;top:1190px"><i class="f">F</i><b class="p">SGSIN</b><span class="n">CLHU<br>2966150</span><em class="l HLC">HLC</em><s class="i">22G1</s></div>
<div class="c y" style="left:1417px;top:1105px"><i class="f">F</i><b class="p">SGSIN</b><span class="n">BSIU<br>2059221</span><em class="l HLC">HLC</em><s class="i">22G1</s></div>
<div class="c y" style="left:1417px;top:1020px"><i class="f">F</i><b class="p">SGSIN</b><span class="n">TCLU<br>2851179</span><em class="l HLC">HLC</em><s class="i">22G1</s></div>
<div class="c b" style="left:1417px;top:935px"><i class="f">F</i><b class="p">SGSIN</b><u class="t"></u><span class="n">OOLU<br>8684083</span><em class="l OOC">OOC</em><s class="i">45G1</s><q class="s">99</q></div>
<div class="c b" style="left:1417px;top:850px"><i class="f">F</i><b class="p">SGSIN</b><u class="t"></u><span class="n">OOLU<br>9945469</span><em class="l OOC">OOC</em><s class="i">45G1</s><q class="s">84</q></div>
<div class="c b" style="left:1417px;top:765px"><i class="f">F</i><b class="p">SGSIN</b><u class="t"></u><span class="n">HLXU<br>8191477</span><em class="l HLC">HLC</em><s class="i">45G1</s><q class="s">68</q></div>
<div class="c b" style="left:1417px;top:680px"><i class="f">F</i><b class="p">SGSIN</b><u class="t"></u><span class="n">OOLU<br>8381261</span><em class="l OOC">OOC</em><s class="i">45G1</s><q class="s">52</q></div>
<div class="c b" style="left:1417px;top:595px"><i class="f">F</i><b class="p">SGSIN</b><u class="t"></u><span class="n">CAXU<br>9191540</span><em class="l HMM">HMM</em><s class="i">4500</s><q class="s">36</q></div>
<div class="c y" style="left:787px;top:1190px"><i class="f">F</i><b class="p">SGSIN</b><span class="n">HLXU<br>1370845</span><em class="l HLC">HLC</em><s class="i">22G1</s></div>
<div class="c y" style="left:787px;top:1105px"><i class="f">F</i><b class="p">SGSIN</b><span class="n">HLXU<br>1121020</span><em class="l HLC">HLC</em><s class="i">22G1</s></div>
<div class="c y" style="left:787px;top:1020px"><i class="f">F</i><b class="p">SGSIN</b><span class="n">TCKU<br>2812046</span><em class="l HLC">HLC</em><s class="i">22G1</s></div>
<div class="c b" style="left:787px;top:935px"><i class="f">F</i><b class="p">SGSIN</b><span class="n">OOLU<br>7746046</span><em class="l OOC">OOC</em><s class="i">42G1</s><q class="s">90</q></div>
<div class="c b" style="left:787px;top:850px"><i class="f">F</i><b class="p">SGSIN</b><span class="n">OOLU<br>7726902</span><em class="l OOC">OOC</em><s class="i">42G1</s><q class="s">75</q></div>
<div class="c b" style="left:787px;top:765px"><i class="f">F</i><b class="p">SGSIN</b><span class="n">OOLU<br>7848644</span><em class="l OOC">OOC</em><s class="i">42G1</s><q class="s">59</q></div>
<div class="c b" style="left:787px;top:680px"><i class="f">F</i><b class="p">SGSIN</b><span class="n">OOLU<br>7687600</span><em class="l OOC">OOC</em><s class="i">42G1</s><q class="s">43</q></div>
<div class="c b" style="left:787px;top:595px"><i class="f">F</i><b class="p">SGSIN</b><span class="n">OOLU<br>7520233</span><em class="l OOC">OOC</em><s class="i">42G1</s><q class="s">27</q></div>
<div class="c b" style="left:787px;top:510px"><i class="f">F</i><b class="p">SGSIN</b><u class="t"></u><span class="n">HDMU<br>6844000</span><em class="l HMM">HMM</em><s class="i">4500</s><q class="s">13</q></div>
<div class="c b" style="left:787px;top:425px"><i class="f">F</i><b class="p">SGSIN</b><u class="t"></u><span class="n">OOLU<br>8736628</span><em class="l OOC">OOC</em><s class="i">45G1</s><q class="s">1</q></div>
<div class="c y" style="left:1487px;top:1190px"><i class="f">F</i><b class="p">SGSIN</b><span class="n">FCIU<br>4135880</span><em class="l ZIM">ZIM</em><s class="i">22G1</s></div>
<div class="c y" style="left:1487px;top:1105px"><i class="f">F</i><b class="p">SGSIN</b><span class="n">NYKU<br>3344190</span><em class="l NYK">NYK</em><s class="i">22G1</s></div>
<div class="c y" style="left:1487px;top:1020px"><i class="f">F</i><b class="p">SGSIN</b><span class="n">CAIU<br>2621307</span><em class="l HLC">HLC</em><s class="i">22G1</s></div>
<div class="c b" style="left:1487px;top:935px"><i class="f">F</i><b class="p">SGSIN</b><u class="t"></u><span class="n">OOLU<br>6898933</span><em class="l OOC">OOC</em><s class="i">45G1</s><q class="s">100</q></div>
<div class="c b" style="left:1487px;top:850px"><i class="f">F</i><b class="p">SGSIN</b><u class="t"></u><span class="n">APHU<br>6385400</span><em class="l APL">APL</em><s class="i">4500</s><q class="s">85</q></div>
<div class="c b" style="left:1487px;top:765px"><i class="f">F</i><b class="p">SGSIN</b><u class="t"></u><span class="n">OOLU<br>9681371</span><em class="l OOC">OOC</em><s class="i">45G1</s><q class="s">69</q></div>
<div class="c b" style="left:1487px;top:680px"><i class="f">F</i><b class="p">SGSIN</b><u class="t"></u><span class="n">OOLU<br>8098420</span><em class="l OOC">OOC</em><s class="i">45G1</s><q class="s">53</q></div>
<div class="c b" style="left:1487px;top:595px"><i class="f">F</i><b class="p">SGSIN</b><u class="t"></u><span class="n">OOLU<br>9449005</span><em class="l OOC">OOC</em><s class="i">45G1</s><q class="s">37</q></div>
<div class="c b" style="left:1487px;top:510px"><i class="f">F</i><b class="p">SGSIN</b><u class="t"></u><u style="left:55px;top:16px;width:10px;height:3px;background:#000"></u><span class="n">HLXU<br>4696769</span><em class="l HLC">HLC</em><s class="i">45P8</s><q class="s">22</q></div>
<div class="c y" style="left:717px;top:1190px"><i class="f">F</i><b class="p">SGSIN</b><span class="n">HLXU<br>3244337</span><em class="l HLC">HLC</em><s class="i">22G1</s></div>
<div class="c y" style="left:717px;top:1105px"><i class="f">F</i><b class="p">SGSIN</b><span class="n">TCKU<br>3848887</span><em class="l ZIM">ZIM</em><s class="i">22G1</s></div>
<div class="c y" style="left:717px;top:1020px"><i class="f">F</i><b class="p">SGSIN</b><span class="n">HLXU<br>1338761</span><em class="l HLC">HLC</em><s class="i">22G1</s></div>
<div class="c b" style="left:717px;top:935px"><i class="f">F</i><b class="p">SGSIN</b><u class="t"></u><span class="n">OOLU<br>9922479</span><em class="l OOC">OOC</em><s class="i">45G1</s><q class="s">89</q></div>
<div class="c b" style="left:717px;top:850px"><i class="f">F</i><b class="p">SGSIN</b><u class="t"></u><span class="n">TEMU<br>6832615</span><em class="l OOC">OOC</em><s class="i">45G1</s><q class="s">74</q></div>
<div class="c b" style="left:717px;top:765px"><i class="f">F</i><b class="p">SGSIN</b><u class="t"></u><span class="n">FSCU<br>8543678</span><em class="l MOL">MOL</em><s class="i">4500</s><q class="s">58</q></div>
<div class="c b" style="left:717px;top:680px"><i class="f">F</i><b class="p">SGSIN</b><u class="t"></u><span class="n">OOLU<br>9559419</span><em class="l OOC">OOC</em><s class="i">45G1</s><q class="s">42</q></div>
<div class="c b" style="left:717px;top:595px"><i class="f">F</i><b class="p">SGSIN</b><u class="t"></u><span class="n">OOLU<br>9636515</span><em class="l OOC">OOC</em><s class="i">45G1</s><q class="s">26</q></div>
<div class="c b" style="left:717px;top:510px"><i class="f">F</i><b class="p">SGSIN</b><u class="t"></u><span class="n">TCLU<br>1779167</span><em class="l OOC">OOC</em><s class="i">45G1</s><q class="s">12</q></div>
<div class="c y" style="left:1557px;top:1190px"><i class="f">F</i><b class="p">SGSIN</b><span class="n">TRLU<br>8800460</span><em class="l HLC">HLC</em><s class="i">22G0</s></div>
<div class="c y" style="left:1557px;top:1105px"><i class="f">F</i><b class="p">SGSIN</b><span class="n">TCLU<br>3279920</span><em class="l HLC">HLC</em><s class="i">22G0</s></div>
<div class="c y" style="left:1557px;top:1020px"><i class="f">F</i><b class="p">SGSIN</b><span class="n">TCLU<br>2830622</span><em class="l HLC">HLC</em><s class="i">22G1</s></div>
<div class="c b" style="left:1557px;top:935px"><i class="f">F</i><b class="p">SGSIN</b><u class="t"></u><span class="n">OOLU<br>8387402</span><em class="l OOC">OOC</em><s class="i">45G1</s><q class="s">101</q></div>
<div class="c b" style="left:1557px;top:850px"><i class="f">F</i><b class="p">SGSIN</b><u class="t"></u><span class="n">TRLU<br>7015226</span><em class="l HLC">HLC</em><s class="i">4510</s><q class="s">86</q></div>
<div class="c b" style="left:1557px;top:765px"><i class="f">F</i><b class="p">SGSIN</b><u class="t"></u><span class="n">CLHU<br>8876331</span><em class="l HLC">HLC</em><s class="i">45G0</s><q class="s">70</q></div>
<div class="c b" style="left:1557px;top:680px"><i class="f">F</i><b class="p">SGSIN</b><u class="t"></u><span class="n">SEGU<br>4079255</span><em class="l HLC">HLC</em><s class="i">45G1</s><q class="s">54</q></div>
<div class="c b" style="left:1557px;top:595px"><i class="f">F</i><b class="p">SGSIN</b><u class="t"></u><span class="n">OOLU<br>8517764</span><em class="l OOC">OOC</em><s class="i">45G1</s><q class="s">38</q></div>
<div class="c y" style="left:647px;top:1190px"><i class="f">F</i><b class="p">SGSIN</b><span class="n">FSCU<br>7718637</span><em class="l HLC">HLC</em><s class="i">22G1</s></div>
<div class="c y" style="left:647px;top:1105px"><i class="f">F</i><b class="p">SGSIN</b><span class="n">HLXU<br>1392232</span><em class="l HLC">HLC</em><s class="i">22G1</s></div>
<div class="c y" style="left:647px;top:1020px"><i class="f">F</i><b class="p">SGSIN</b><span class="n">ZIMU<br>1008387</span><em class="l ZIM">ZIM</em><s class="i">2300</s></div>
<div class="c b" style="left:647px;top:935px"><i class="f">F</i><b class="p">SGSIN</b><u class="t"></u><span class="n">OOLU<br>6868353</span><em class="l OOC">OOC</em><s class="i">45G1</s><q class="s">88</q></div>
<div class="c b" style="left:647px;top:850px"><i class="f">F</i><b class="p">SGSIN</b><u class="t"></u><span class="n">HLXU<br>8274709</span><em class="l HLC">HLC</em><s class="i">45G1</s><q class="s">73</q></div>
<div class="c b" style="left:647px;top:765px"><i class="f">F</i><b class="p">SGSIN</b><u class="t"></u><span class="n">NYKU<br>4367415</span><em class="l NYK">NYK</em><s class="i">45G1</s><q class="s">57</q></div>
<div class="c b" style="left:647px;top:680px"><i class="f">F</i><b class="p">SGSIN</b><u class="t"></u><span class="n">OOLU<br>6900455</span><em class="l OOC">OOC</em><s class="i">45G1</s><q class="s">41</q></div>
<div class="c b" style="left:647px;top:595px"><i class="f">F</i><b class="p">SGSIN</b><u class="t"></u><span class="n">FCIU<br>8637459</span><em class="l ZIM">ZIM</em><s class="i">45G1</s><q class="s">25</q></div>
<div class="c b" style="left:647px;top:510px"><i class="f">F</i><b class="p">SGSIN</b><u class="t"></u><span class="n">OOLU<br>8125660</span><em class="l OOC">OOC</em><s class="i">45G1</s><q class="s">11</q></div>
<div class="c y" style="left:1627px;top:1105px"><i class="f">F</i><b class="p">SGSIN</b><span class="n">FCIU<br>3079652</span><em class="l HLC">HLC</em><s class="i">22G1</s></div>
<div class="c y" style="left:1627px;top:1020px"><i class="f">F</i><b class="p">SGSIN</b><span class="n">TGHU<br>2398117</span><em class="l HLC">HLC</em><s class="i">22G0</s></div>
<div class="c y" style="left:1627px;top:935px"><i class="f">F</i><b class="p">SGSIN</b><span class="n">HLXU<br>3484657</span><em class="l HLC">HLC</em><s class="i">22G1</s></div>
<div class="c b" style="left:1627px;top:850px"><i class="f">F</i><b class="p">SGSIN</b><u class="t"></u><span class="n">OOLU<br>9591977</span><em class="l OOC">OOC</em><s class="i">45G1</s><q class="s">87</q></div>
<div class="c b" style="left:1627px;top:765px"><i class="f">F</i><b class="p">SGSIN</b><u class="t"></u><span class="n">TCNU<br>7466932</span><em class="l APL">APL</em><s class="i">4500</s><q class="s">71</q></div>
<div class="c b" style="left:1627px;top:680px"><i class="f">F</i><b class="p">SGSIN</b><u class="t"></u><span class="n">CAIU<br>8005459</span><em class="l HLC">HLC</em><s class="i">45G1</s><q class="s">55</q></div>
<div class="c b" style="left:1627px;top:595px"><i class="f">F</i><b class="p">SGSIN</b><u class="t"></u><span class="n">HLBU<br>1358879</span><em class="l HLC">HLC</em><s class="i">45G1</s><q class="s">39</q></div>
<div class="c b" style="left:1627px;top:510px"><i class="f">F</i><b class="p">SGSIN</b><u class="t"></u><span class="n">HLXU<br>8572750</span><em class="l HLC">HLC</em><s class="i">45G1</s><q class="s">23</q></div>
<div class="c y" style="left:577px;top:1105px"><i class="f">F</i><b class="p">SGSIN</b><span class="n">HLXU<br>3103030</span><em class="l HLC">HLC</em><s class="i">22G1</s></div>
<div class="c y" style="left:577px;top:1020px"><i class="f">F</i><b class="p">SGSIN</b><span class="n">HLXU<br>1172259</span><em class="l HLC">HLC</em><s class="i">22G1</s></div>
<div class="c y" style="left:577px;top:935px"><i class="f">F</i><b class="p">SGSIN</b><span class="n">GLDU<br>3398305</span><em class="l HLC">HLC</em><s class="i">22G1</s></div>
<div class="c b" style="left:577px;top:850px"><i class="f">F</i><b class="p">SGSIN</b><u class="t"></u><span class="n">HLXU<br>8056651</span><em class="l HLC">HLC</em><s class="i">45G1</s><q class="s">72</q></div>
<div class="c b" style="left:577px;top:765px"><i class="f">F</i><b class="p">SGSIN</b><span class="n">HLXU<br>8236308</span><em class="l HLC">HLC</em><s class="i">4400</s><q class="s">56</q></div>
<div class="c b" style="left:577px;top:680px"><i class="f">F</i><b class="p">SGSIN</b><u class="t"></u><span class="n">OOLU<br>9369276</span><em class="l OOC">OOC</em><s class="i">45G1</s><q class="s">40</q></div>
<div class="c b" style="left:577px;top:595px"><i class="f">F</i><b class="p">SGSIN</b><u class="t"></u><span class="n">OOLU<br>9696896</span><em class="l OOC">OOC</em><s class="i">45G1</s><q class="s">24</q></div>
<div class="c b" style="left:577px;top:510px"><i class="f">F</i><b class="p">SGSIN</b><u class="t"></u><span class="n">TCNU<br>8937683</span><em class="l ZIM">ZIM</em><s class="i">45G1</s><q class="s">10</q></div>
<div style="left:0;top:1400px;width:2560px;height:40px;background:#333"><span style="left:663.97px;top:6.74px;font-size:27px;line-height:27px;color:#fff;transform:scaleX(0.9646);transform-origin:0 0;">Continue selecting containers, and then click Unload or Restow to move them.</span></div>
<div style="left:2212px;top:217px;width:19px;height:1223px;background:linear-gradient(90deg,rgba(0,0,0,0),rgba(0,0,0,.035) 35%,rgba(0,0,0,.1) 70%,rgba(0,0,0,.2))"></div>
<div id="pn" style="left:2230px;top:217px;width:330px;height:1223px;background:#fff;border-left:3px solid #000;border-top:3px solid #000;overflow:hidden">
<div style="left:0;top:0;width:327px;height:39px;background:#ddd"><div style="left:10px;top:11px;font-size:15px;line-height:20px;font-weight:bold;color:#007b7d">Containers to move</div><div style="right:11px;top:11px;font-size:15px;line-height:20px;font-weight:bold;color:#000">101</div></div>
<div style="left:0;top:39px;width:327px;height:53px;background:#eee">
<div class="btn t" style="left:8px;top:11px;width:114px;height:33px;line-height:29px;text-align:left;"><svg style="left:5px;top:9px" width="14" height="12" viewBox="0 0 14 12"><path d="M2.5 0.5V9.5M0.5 7.5L2.5 10L4.5 7.5" stroke="#fff" stroke-width="1.1" fill="none"/><path d="M6 2H13.5M6 5.5H11M6 9H8.5" stroke="#fff" stroke-width="1.3"/></svg></div>
<div class="btn t" style="left:258px;top:11px;width:31px;height:33px"><svg style="left:6px;top:8px" width="15" height="14" viewBox="0 0 15 14"><rect x="0.7" y="0.7" width="13.6" height="12.6" rx="1.2" fill="none" stroke="#fff" stroke-width="1.2"/><path d="M5.2 0.7V13.3M9.8 0.7V13.3" stroke="#fff" stroke-width="1.2"/></svg></div>
<div class="btn" style="left:294px;top:11px;width:26px;height:33px;background:#dc0008;border-color:#f6d6d6 #a08080 #a08080 #f6d6d6"><svg style="left:7px;top:11px" width="8" height="8" viewBox="0 0 8 8"><path d="M1 1L7 7M7 1L1 7" stroke="#fff" stroke-width="1.7"/></svg></div>
</div>
<span style="left:33.13px;top:60.12px;font-size:13.8px;line-height:13.8px;font-weight:bold;color:#fff;transform:scaleX(0.9906);transform-origin:0 0;">Resequence</span>
<div class="ph" style="left:5px;top:102px">Ctr Nbr</div><div class="ph" style="left:131px;top:102px">Line</div><div class="ph" style="left:222px;top:102px">POD</div>
<div class="pr" style="top:120px"><span style="left:5px">OOLU8736628</span><span style="left:131px">OOC</span><span style="left:222px">SGSIN</span></div>
<div class="pr" style="top:138px"><span style="left:5px">OOLU9807140</span><span style="left:131px">OOC</span><span style="left:222px">SGSIN</span></div>
<div class="pr" style="top:156px"><span style="left:5px">ZCSU8972380</span><span style="left:131px">ZIM</span><span style="left:222px">SGSIN</span></div>
<div class="pr" style="top:174px"><span style="left:5px">BSIU9575195</span><span style="left:131px">ZIM</span><span style="left:222px">SGSIN</span></div>
<div class="pr" style="top:192px"><span style="left:5px">OOLU6903120</span><span style="left:131px">OOC</span><span style="left:222px">SGSIN</span></div>
<div class="pr" style="top:210px"><span style="left:5px">OOLU4365196</span><span style="left:131px">OOC</span><span style="left:222px">SGSIN</span></div>
<div class="pr" style="top:228px"><span style="left:5px">OOLU4499657</span><span style="left:131px">OOC</span><span style="left:222px">SGSIN</span></div>
<div class="pr" style="top:246px"><span style="left:5px">MOFU0657633</span><span style="left:131px">MOL</span><span style="left:222px">SGSIN</span></div>
<div class="pr" style="top:264px"><span style="left:5px">TTNU5691562</span><span style="left:131px">ZIM</span><span style="left:222px">SGSIN</span></div>
<div class="pr" style="top:282px"><span style="left:5px">TCNU8937683</span><span style="left:131px">ZIM</span><span style="left:222px">SGSIN</span></div>
<div class="pr" style="top:300px"><span style="left:5px">OOLU8125660</span><span style="left:131px">OOC</span><span style="left:222px">SGSIN</span></div>
<div class="pr" style="top:318px"><span style="left:5px">TCLU1779167</span><span style="left:131px">OOC</span><span style="left:222px">SGSIN</span></div>
<div class="pr" style="top:336px"><span style="left:5px">HDMU6844000</span><span style="left:131px">HMM</span><span style="left:222px">SGSIN</span></div>
<div class="pr" style="top:354px"><span style="left:5px">TCLU8832664</span><span style="left:131px">NYK</span><span style="left:222px">SGSIN</span></div>
<div class="pr" style="top:372px"><span style="left:5px">OOLU9692479</span><span style="left:131px">OOC</span><span style="left:222px">SGSIN</span></div>
<div class="pr" style="top:390px"><span style="left:5px">OOLU8014857</span><span style="left:131px">OOC</span><span style="left:222px">SGSIN</span></div>
<div class="pr" style="top:408px"><span style="left:5px">TRLU7474251</span><span style="left:131px">NYK</span><span style="left:222px">SGSIN</span></div>
<div class="pr" style="top:426px"><span style="left:5px">OOLU7620551</span><span style="left:131px">OOC</span><span style="left:222px">SGSIN</span></div>
<div class="pr" style="top:444px"><span style="left:5px">OOLU7950023</span><span style="left:131px">OOC</span><span style="left:222px">SGSIN</span></div>
<div class="pr" style="top:462px"><span style="left:5px">ZCSU2763552</span><span style="left:131px">ZIM</span><span style="left:222px">SGSIN</span></div>
<div class="pr" style="top:480px"><span style="left:5px">MOFU6821852</span><span style="left:131px">MOL</span><span style="left:222px">SGSIN</span></div>
<div class="pr" style="top:498px"><span style="left:5px">HLXU4696769</span><span style="left:131px">HLC</span><span style="left:222px">SGSIN</span></div>
<div class="pr" style="top:516px"><span style="left:5px">HLXU8572750</span><span style="left:131px">HLC</span><span style="left:222px">SGSIN</span></div>
<div class="pr" style="top:534px"><span style="left:5px">OOLU9696896</span><span style="left:131px">OOC</span><span style="left:222px">SGSIN</span></div>
<div class="pr" style="top:552px"><span style="left:5px">FCIU8637459</span><span style="left:131px">ZIM</span><span style="left:222px">SGSIN</span></div>
<div class="pr" style="top:570px"><span style="left:5px">OOLU9636515</span><span style="left:131px">OOC</span><span style="left:222px">SGSIN</span></div>
<div class="pr" style="top:588px"><span style="left:5px">OOLU7520233</span><span style="left:131px">OOC</span><span style="left:222px">SGSIN</span></div>
<div class="pr" style="top:606px"><span style="left:5px">OOLU7518792</span><span style="left:131px">OOC</span><span style="left:222px">SGSIN</span></div>
<div class="pr" style="top:624px"><span style="left:5px">TCKU4531290</span><span style="left:131px">OOC</span><span style="left:222px">SGSIN</span></div>
<div class="pr" style="top:642px"><span style="left:5px">ZCSU2596157</span><span style="left:131px">ZIM</span><span style="left:222px">SGSIN</span></div>
<div class="pr" style="top:660px"><span style="left:5px">OOLU7758941</span><span style="left:131px">OOC</span><span style="left:222px">SGSIN</span></div>
<div class="pr" style="top:678px"><span style="left:5px">OOLU7998752</span><span style="left:131px">OOC</span><span style="left:222px">SGSIN</span></div>
<div class="pr" style="top:696px"><span style="left:5px">OOLU4504326</span><span style="left:131px">OOC</span><span style="left:222px">SGSIN</span></div>
<div class="pr" style="top:714px"><span style="left:5px">TGHU5204318</span><span style="left:131px">ZIM</span><span style="left:222px">SGSIN</span></div>
<div class="pr" style="top:732px"><span style="left:5px">MOFU5802776</span><span style="left:131px">MOL</span><span style="left:222px">SGSIN</span></div>
<div class="pr" style="top:750px"><span style="left:5px">CAXU9191540</span><span style="left:131px">HMM</span><span style="left:222px">SGSIN</span></div>
<div class="pr" style="top:768px"><span style="left:5px">OOLU9449005</span><span style="left:131px">OOC</span><span style="left:222px">SGSIN</span></div>
<div class="pr" style="top:786px"><span style="left:5px">OOLU8517764</span><span style="left:131px">OOC</span><span style="left:222px">SGSIN</span></div>
<div class="pr" style="top:804px"><span style="left:5px">HLBU1358879</span><span style="left:131px">HLC</span><span style="left:222px">SGSIN</span></div>
<div class="pr" style="top:822px"><span style="left:5px">OOLU9369276</span><span style="left:131px">OOC</span><span style="left:222px">SGSIN</span></div>
<div class="pr" style="top:840px"><span style="left:5px">OOLU6900455</span><span style="left:131px">OOC</span><span style="left:222px">SGSIN</span></div>
<div class="pr" style="top:858px"><span style="left:5px">OOLU9559419</span><span style="left:131px">OOC</span><span style="left:222px">SGSIN</span></div>
<div class="pr" style="top:876px"><span style="left:5px">OOLU7687600</span><span style="left:131px">OOC</span><span style="left:222px">SGSIN</span></div>
<div class="pr" style="top:894px"><span style="left:5px">OOLU7335451</span><span style="left:131px">OOC</span><span style="left:222px">SGSIN</span></div>
<div class="pr" style="top:912px"><span style="left:5px">OOLU7793259</span><span style="left:131px">OOC</span><span style="left:222px">SGSIN</span></div>
<div class="pr" style="top:930px"><span style="left:5px">ZCSU2730482</span><span style="left:131px">ZIM</span><span style="left:222px">SGSIN</span></div>
<div class="pr" style="top:948px"><span style="left:5px">OOLU7555707</span><span style="left:131px">OOC</span><span style="left:222px">SGSIN</span></div>
<div class="pr" style="top:966px"><span style="left:5px">OOLU4363737</span><span style="left:131px">OOC</span><span style="left:222px">SGSIN</span></div>
<div class="pr" style="top:984px"><span style="left:5px">OOLU7433817</span><span style="left:131px">OOC</span><span style="left:222px">SGSIN</span></div>
<div class="pr" style="top:1002px"><span style="left:5px">ZCSU2782362</span><span style="left:131px">ZIM</span><span style="left:222px">SGSIN</span></div>
<div class="pr" style="top:1020px"><span style="left:5px">MOFU5885261</span><span style="left:131px">MOL</span><span style="left:222px">SGSIN</span></div>
<div class="pr" style="top:1038px"><span style="left:5px">OOLU8381261</span><span style="left:131px">OOC</span><span style="left:222px">SGSIN</span></div>
<div class="pr" style="top:1056px"><span style="left:5px">OOLU8098420</span><span style="left:131px">OOC</span><span style="left:222px">SGSIN</span></div>
<div class="pr" style="top:1074px"><span style="left:5px">SEGU4079255</span><span style="left:131px">HLC</span><span style="left:222px">SGSIN</span></div>
<div class="pr" style="top:1092px"><span style="left:5px">CAIU8005459</span><span style="left:131px">HLC</span><span style="left:222px">SGSIN</span></div>
<div class="pr" style="top:1110px"><span style="left:5px">HLXU8236308</span><span style="left:131px">HLC</span><span style="left:222px">SGSIN</span></div>
<div class="pr" style="top:1128px"><span style="left:5px">NYKU4367415</span><span style="left:131px">NYK</span><span style="left:222px">SGSIN</span></div>
<div class="pr" style="top:1146px"><span style="left:5px">FSCU8543678</span><span style="left:131px">MOL</span><span style="left:222px">SGSIN</span></div>
<div class="pr" style="top:1164px"><span style="left:5px">OOLU7848644</span><span style="left:131px">OOC</span><span style="left:222px">SGSIN</span></div>
<div class="pr" style="top:1182px"><span style="left:5px">OOLU4506870</span><span style="left:131px">OOC</span><span style="left:222px">SGSIN</span></div>
<div class="pr" style="top:1200px"><span style="left:5px">OOLU7474117</span><span style="left:131px">OOC</span><span style="left:222px">SGSIN</span></div>
</div>
<div style="left:2472px;top:1352px;width:58px;height:58px;border-radius:13px;background:#00989b;box-shadow:0 4px 18px rgba(0,0,0,.18)"><div style="left:16px;top:16px;width:16px;height:16px;border-radius:5.5px 5.5px 0 0;background:rgba(255,255,255,.52)"></div><div style="left:27px;top:25px;width:16px;height:16px;border-radius:5.5px 5.5px 0 5.5px;background:linear-gradient(#fff,#d6f2f2)"></div></div>
</body></html>
